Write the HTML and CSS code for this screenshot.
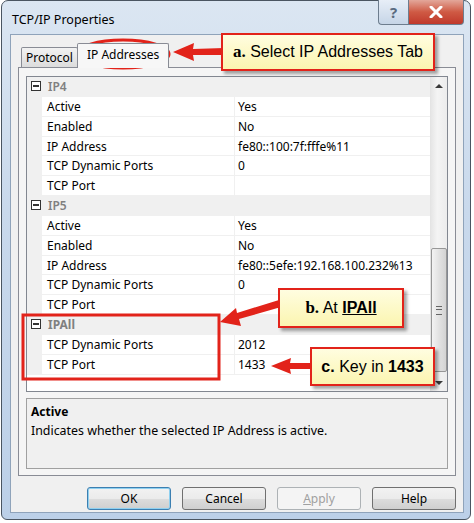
FILE: index.html
```html
<!DOCTYPE html>
<html lang="en">
<head>
    <meta charset="UTF-8">
    <title>TCP/IP Properties</title>
    <link rel="stylesheet" href="styles.css">
</head>
<body>
<div class="page">
    <div class="window">
        <div class="titlebar">
            <span class="title">TCP/IP Properties</span>
            <div class="caption-btns">
                <div class="cap-help">?</div>
                <div class="cap-close">
                    <svg width="16" height="12" viewBox="0 0 16 12"><path d="M3 1 L13 11 M13 1 L3 11" stroke="#fff" stroke-width="3" stroke-linecap="round"/></svg>
                </div>
            </div>
        </div>
        <div class="client">
            <ul class="tabs">
                <li class="tab">Protocol</li>
                <li class="tab active">IP Addresses</li>
            </ul>
            <div class="panel">
                <div class="grid">
                    <div class="rows">
                        <div class="cat"><span class="box"></span><span class="cat-name">IP4</span></div>
                        <div class="row"><span class="gut"></span><span class="name">Active</span><span class="val">Yes</span></div>
                        <div class="row"><span class="gut"></span><span class="name">Enabled</span><span class="val">No</span></div>
                        <div class="row"><span class="gut"></span><span class="name">IP Address</span><span class="val">fe80::100:7f:fffe%11</span></div>
                        <div class="row"><span class="gut"></span><span class="name">TCP Dynamic Ports</span><span class="val">0</span></div>
                        <div class="row"><span class="gut"></span><span class="name">TCP Port</span><span class="val"></span></div>
                        <div class="cat"><span class="box"></span><span class="cat-name">IP5</span></div>
                        <div class="row"><span class="gut"></span><span class="name">Active</span><span class="val">Yes</span></div>
                        <div class="row"><span class="gut"></span><span class="name">Enabled</span><span class="val">No</span></div>
                        <div class="row"><span class="gut"></span><span class="name">IP Address</span><span class="val">fe80::5efe:192.168.100.232%13</span></div>
                        <div class="row"><span class="gut"></span><span class="name">TCP Dynamic Ports</span><span class="val">0</span></div>
                        <div class="row"><span class="gut"></span><span class="name">TCP Port</span><span class="val"></span></div>
                        <div class="cat"><span class="box"></span><span class="cat-name bold">IPAll</span></div>
                        <div class="row"><span class="gut"></span><span class="name">TCP Dynamic Ports</span><span class="val">2012</span></div>
                        <div class="row"><span class="gut"></span><span class="name">TCP Port</span><span class="val">1433</span></div>
                    </div>
                    <div class="scroll">
                        <div class="arrow-up"></div>
                        <div class="thumb"><span class="grip"></span></div>
                        <div class="arrow-down"></div>
                    </div>
                </div>
                <div class="desc">
                    <div class="desc-title">Active</div>
                    <div class="desc-text">Indicates whether the selected IP Address is active.</div>
                </div>
            </div>
            <div class="buttons">
                <div class="btn default">OK</div>
                <div class="btn">Cancel</div>
                <div class="btn disabled"><u>A</u>pply</div>
                <div class="btn">Help</div>
            </div>
        </div>
    </div>

    <!-- annotations drawn over the dialog -->
    <svg class="marks" width="474" height="523" viewBox="0 0 474 523">
        <ellipse cx="123" cy="54" rx="46" ry="14" fill="none" stroke="#e2231a" stroke-width="3"/>
        <rect x="23" y="315" width="196" height="64" fill="none" stroke="#e2231a" stroke-width="3"/>
        <polygon points="173,52 194,43 193,49 224,48 224,55 193,55 194,61" fill="#e2231a"/>
        <polygon points="220,322 236,308 237,313 279,300 281,307 239,319 241,326" fill="#e2231a"/>
        <polygon points="271,366 291,358 290,363 312,363 312,369 290,369 291,374" fill="#e2231a"/>
    </svg>
    <div class="callout call-a"><span><b class="serif">a.</b> Select IP Addresses Tab</span></div>
    <div class="callout call-b"><span><b class="serif">b.</b> At <b><u>IPAll</u></b></span></div>
    <div class="callout call-c"><span><b>c.</b> Key in <b>1433</b></span></div>
</div>
</body>
</html>
```

FILE: styles.css
```css
html, body, ul {
    margin: 0;
    padding: 0;
}
body {
    background: #fff;
    font-family: "Noto Sans", "Open Sans", sans-serif;
    font-size: 12px;
    color: #000;
}
li {
    list-style: none;
}
.page {
    position: relative;
    width: 474px;
    height: 523px;
}
.window {
    width: 468px;
    height: 518px;
    margin-left: 1px;
    border: 1px solid #4a5561;
    border-radius: 7px 7px 6px 6px;
    background: linear-gradient(180deg, #dbe6f2 0%, #c9d9ec 40%, #bcd0e8 100%);
    display: flex;
    flex-direction: column;
}
.titlebar {
    height: 33px;
    display: flex;
    justify-content: space-between;
    align-items: flex-start;
}
.title {
    margin: 10px 0 0 10px;
    font-size: 12.5px;
}
.caption-btns {
    display: flex;
    margin-right: 6px;
    margin-top: -1px;
}
.cap-help, .cap-close {
    height: 24px;
    border: 1px solid #6d7d8e;
    border-top: none;
    display: flex;
    align-items: center;
    justify-content: center;
}
.cap-help {
    width: 29px;
    border-radius: 0 0 0 4px;
    border-right: none;
    background: linear-gradient(180deg, #e7eef7, #c6d5e7);
    color: #5a6b80;
    font-weight: bold;
    font-size: 15px;
}
.cap-close {
    width: 54px;
    border-radius: 0 0 4px 0;
    background: linear-gradient(180deg, #e3a79a 0%, #cf5a44 50%, #c0392b 100%);
}
.client {
    flex: 1;
    margin: 0 6px 6px 8px;
    border: 1px solid #8fa3ba;
    background: #f0f0f0;
    display: flex;
    flex-direction: column;
}
.tabs {
    display: flex;
    align-items: flex-end;
    height: 32px;
    padding-left: 10px;
    position: relative;
    z-index: 1;
}
.tab {
    height: 19px;
    line-height: 19px;
    padding: 0 4px;
    border: 1px solid #898c95;
    border-bottom: none;
    background: linear-gradient(180deg, #f2f2f2, #dcdcdc);
    border-radius: 2px 2px 0 0;
}
.tab.active {
    height: 24px;
    line-height: 22px;
    padding: 0 9px;
    background: #f7f7f7;
    margin-left: -1px;
    margin-bottom: -1px;
}
.panel {
    margin: 0 7px;
    height: 399px;
    border: 1px solid #898c95;
    background: #f5f5f5;
    padding: 8px 7px 0;
}
.grid {
    height: 314px;
    border: 1px solid #828790;
    background: #fff;
    display: flex;
}
.rows {
    flex: 1;
}
.row, .cat {
    height: 19.85px;
    line-height: 19px;
    display: flex;
}
.cat {
    background: #f0f0f0;
    color: #808080;
}
.box {
    width: 8px;
    height: 8px;
    margin: 4px 5px 0 4px;
    border: 1px solid #333;
    background: #fff;
    position: relative;
}
.box::after {
    content: "";
    position: absolute;
    left: 1px;
    top: 3px;
    width: 6px;
    height: 2px;
    background: #333;
}
.cat-name {
    padding-left: 2px;
    font-weight: 600;
}
.cat-name.bold {
    font-weight: bold;
}
.gut {
    width: 15px;
    background: #f0f0f0;
}
.name {
    width: 187px;
    padding-left: 5px;
    border-bottom: 1px solid #f0f0f0;
    border-right: 1px solid #f0f0f0;
}
.val {
    flex: 1;
    padding-left: 3px;
    border-bottom: 1px solid #f0f0f0;
}
.scroll {
    width: 16px;
    border-left: 1px solid #e4e4e4;
    background: linear-gradient(90deg, #e6e6e6, #f4f4f4 40%, #ececec);
    display: flex;
    flex-direction: column;
}
.arrow-up, .arrow-down {
    height: 17px;
    position: relative;
}
.arrow-up::after, .arrow-down::after {
    content: "";
    position: absolute;
    left: 4px;
    border-left: 4px solid transparent;
    border-right: 4px solid transparent;
}
.arrow-up::after {
    top: 7px;
    border-bottom: 4px solid #3a3a3a;
}
.arrow-down::after {
    top: 7px;
    border-top: 4px solid #3a3a3a;
}
.thumb {
    margin-top: 154px;
    height: 122px;
    width: 14px;
    border: 1px solid #979797;
    border-radius: 2px;
    background: linear-gradient(90deg, #f3f3f3, #e2e2e2 50%, #d3d3d3);
    display: flex;
    align-items: center;
    justify-content: center;
}
.grip {
    width: 6px;
    height: 7px;
    border-top: 1px solid #666;
    border-bottom: 1px solid #666;
    background: linear-gradient(180deg, transparent 2px, #666 2px, #666 3px, transparent 3px);
}
.arrow-down {
    margin-top: auto;
}
.desc {
    margin-top: 6px;
    height: 63px;
    border: 1px solid #a0a0a0;
    background: #f0f0f0;
    padding: 3px 4px;
    line-height: 19px;
}
.desc-title {
    font-weight: bold;
}
.desc-text {
    font-size: 12.4px;
}
.buttons {
    display: flex;
    justify-content: flex-end;
    gap: 11px;
    margin: 11px 7px 0 0;
}
.btn {
    width: 82px;
    height: 21px;
    line-height: 21px;
    text-align: center;
    border: 1px solid #707070;
    border-radius: 3px;
    background: linear-gradient(180deg, #f2f2f2 0%, #ebebeb 50%, #dddddd 51%, #cfcfcf 100%);
}
.btn.default {
    border-color: #3c7fb1;
    box-shadow: inset 0 0 0 1px #8fd0f0;
}
.btn.disabled {
    border-color: #adb2b5;
    background: #f4f4f4;
    color: #a0a0a0;
}
.marks {
    position: absolute;
    left: 0;
    top: 0;
}
.callout {
    position: absolute;
    box-sizing: border-box;
    background: linear-gradient(180deg, #fffde0, #fbf5b0);
    border: 2px solid #e2231a;
    box-shadow: 3px 3px 3px rgba(0, 0, 0, 0.35);
    font-family: "Liberation Sans", Arial, sans-serif;
    font-size: 16px;
    display: flex;
    align-items: center;
    justify-content: center;
    white-space: nowrap;
}
.callout .serif {
    font-family: "Liberation Serif", serif;
    font-size: 17px;
}
.call-a {
    left: 221px;
    top: 33px;
    width: 214px;
    height: 38px;
}
.call-b {
    left: 278px;
    top: 288px;
    width: 126px;
    height: 40px;
}
.call-c {
    left: 310px;
    top: 347px;
    width: 125px;
    height: 39px;
}
```
